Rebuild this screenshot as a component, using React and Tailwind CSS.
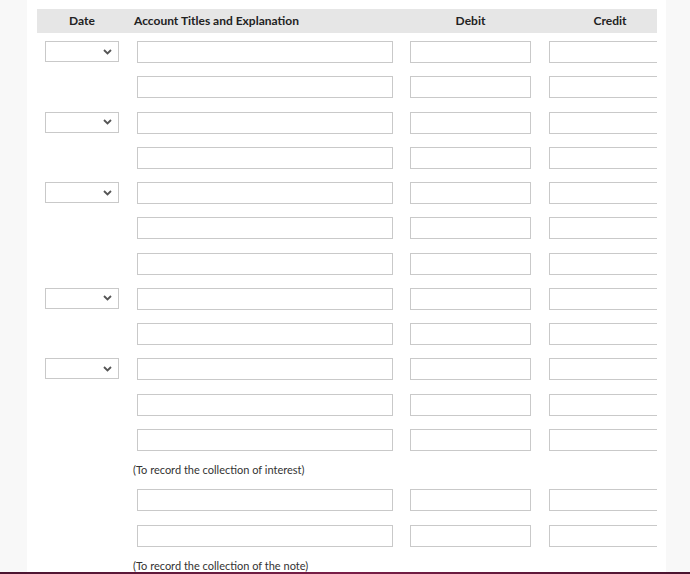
const rows = [
  { date: true },
  { date: false },
  { date: true },
  { date: false },
  { date: true },
  { date: false },
  { date: false },
  { date: true },
  { date: false },
  { date: true },
  { date: false },
  { date: false },
  { note: '(To record the collection of interest)' },
  { date: false },
  { date: false },
  { note: '(To record the collection of the note)' },
];

const Chevron = () => (
  <svg className="w-[9px] h-[6px] text-[#555]" viewBox="0 0 9 6" fill="none" stroke="currentColor">
    <path d="M1 1l3.5 3.5L8 1" strokeWidth="1.8" />
  </svg>
);

const Box = ({ className }) => (
  <div className={`h-[22px] border border-[#c9c9c9] bg-white ${className}`}></div>
);

const App = () => {
  return (
    <div className="w-[690px] h-[574px] bg-[#f8f8f8] relative overflow-hidden" style={{ fontFamily: 'Lato, "Liberation Sans", Arial, sans-serif' }}>
      <div className="ml-[27px] w-[639px] h-[572px] bg-white pl-[10px] pt-[9px]">
        <div className="w-[620px] overflow-hidden">
          {/* Header */}
          <div className="flex h-[24px] items-center bg-[#e6e6e6] text-[12px] font-bold text-[#222] whitespace-nowrap">
            <div className="w-[90px] shrink-0 text-center">Date</div>
            <div className="w-[274px] shrink-0 pl-[7px]">Account Titles and Explanation</div>
            <div className="w-[139px] shrink-0 text-center">Debit</div>
            <div className="w-[140px] shrink-0 text-center">Credit</div>
          </div>

          <div className="flex flex-col gap-[13.25px] pt-[8px]">
            {rows.map((r, i) =>
              r.note ? (
                <div key={i} className="h-[12px] pl-[96px] text-[11px] leading-[12px] text-[#333] whitespace-nowrap">
                  {r.note}
                </div>
              ) : (
                <div key={i} className="flex h-[22px]">
                  <div className="w-[96px] shrink-0 pl-[8px]">
                    {r.date && (
                      <div className="w-[74px] h-[21px] border border-[#c9c9c9] bg-white flex items-center justify-end pr-[6px]">
                        <Chevron />
                      </div>
                    )}
                  </div>
                  <div className="w-[268px] shrink-0 pl-[4px]">
                    <Box className="w-[256px]" />
                  </div>
                  <div className="w-[139px] shrink-0 pl-[9px]">
                    <Box className="w-[121px]" />
                  </div>
                  <div className="w-[140px] shrink-0 pl-[9px]">
                    <Box className="w-[121px]" />
                  </div>
                </div>
              )
            )}
          </div>
        </div>
      </div>
      <div className="h-[2px] bg-gradient-to-r from-[#4a1530] via-[#7a1e48] to-[#4a1530]"></div>
    </div>
  );
};

export default App;
